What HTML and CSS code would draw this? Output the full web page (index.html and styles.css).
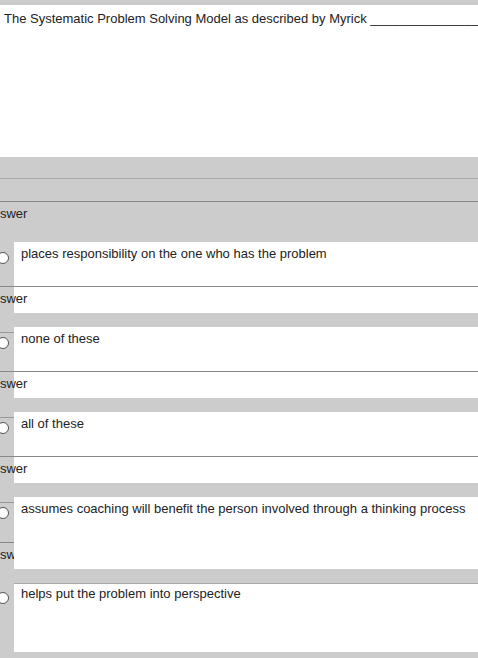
FILE: index.html
```html
<!DOCTYPE html>
<html>
<head>
<meta charset="utf-8">
<link rel="stylesheet" href="styles.css">
</head>
<body>
<div class="topbar"></div>
<div class="question">The Systematic Problem Solving Model as described by Myrick ____________________</div>
<div class="hdr">
  <div class="hdr-a"></div>
  <div class="hdr-b"></div>
  <div class="hdr-label">Answer</div>
</div>

<div class="item">
  <div class="row">
    <div class="lcol"><span class="radio"></span></div>
    <div class="atext">places responsibility on the one who has the problem</div>
  </div>
  <div class="alabel">Answer</div>
</div>

<div class="item">
  <div class="row">
    <div class="lcol lined"><div class="lc-top"><span class="radio"></span></div></div>
    <div class="atext">none of these</div>
  </div>
  <div class="alabel">Answer</div>
</div>

<div class="item">
  <div class="row">
    <div class="lcol lined"><div class="lc-top"><span class="radio"></span></div></div>
    <div class="atext">all of these</div>
  </div>
  <div class="alabel">Answer</div>
</div>

<div class="item">
  <div class="row tall">
    <div class="lcol lined">
      <div class="lc-top"><span class="radio"></span></div>
      <div class="lc-label">Answer</div>
    </div>
    <div class="atext">assumes coaching will benefit the person involved through a thinking process</div>
  </div>
</div>

<div class="item last">
  <div class="row last-row">
    <div class="lcol"><span class="radio radio-last"></span></div>
    <div class="atext bordered">helps put the problem into perspective</div>
  </div>
</div>
</body>
</html>
```
FILE: styles.css
```css
html, body {
  margin: 0;
  padding: 0;
  overflow: hidden;
}
body {
  background: #cccccc;
  font-family: "Liberation Sans", Arial, sans-serif;
  font-size: 13px;
  line-height: 15px;
  color: #222222;
  width: 478px;
}
.topbar {
  height: 5px;
}
.question {
  height: 152px;
  box-sizing: border-box;
  background: #ffffff;
  padding: 6px 4px 0 4px;
  white-space: nowrap;
  overflow: hidden;
}
.hdr {
  height: 85px;
  display: flex;
  flex-direction: column;
}
.hdr-a {
  height: 21px;
  flex: none;
}
.hdr-b {
  height: 22px;
  flex: none;
  border-top: 1px solid #aaaaaa;
}
.hdr-label {
  flex: 1;
  border-top: 1px solid #888888;
  padding-top: 4px;
  text-indent: -16px;
  white-space: nowrap;
}
.item {
  padding-bottom: 14px;
}
.row {
  display: flex;
  height: 44px;
}
.row.tall {
  height: 72px;
}
.row.last-row {
  height: 69px;
}
.lcol {
  width: 14px;
  flex: none;
  display: flex;
  flex-direction: column;
}
.lcol.lined {
  padding-top: 5px;
  box-sizing: border-box;
}
.lc-top {
  border-top: 1px solid #999999;
  height: 39px;
  flex: none;
}
.radio {
  display: block;
  width: 12px;
  height: 12px;
  box-sizing: border-box;
  border: 1px solid #555555;
  border-radius: 50%;
  background: #ffffff;
  margin-left: -3px;
  margin-top: 10px;
}
.radio.radio-last {
  margin-top: 9px;
}
.lc-top .radio {
  margin-top: 4px;
}
.lc-label {
  border-top: 1px solid #888888;
  padding-top: 4px;
  text-indent: -16px;
  white-space: nowrap;
  overflow: hidden;
  flex: 1;
}
.atext {
  flex: 1;
  background: #ffffff;
  padding: 4px 0 0 7px;
  white-space: nowrap;
  overflow: hidden;
}
.atext.bordered {
  border-top: 1px solid #aaaaaa;
  padding-top: 2px;
}
.alabel {
  border-top: 1px solid #888888;
  height: 27px;
  box-sizing: border-box;
  padding-top: 4px;
  background: linear-gradient(to right, #cccccc 14px, #ffffff 14px);
  text-indent: -16px;
  white-space: nowrap;
}
```
